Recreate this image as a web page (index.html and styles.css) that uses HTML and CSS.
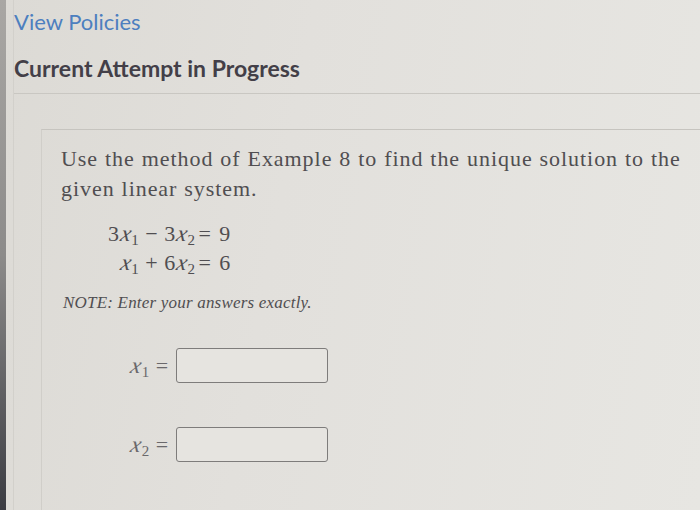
FILE: index.html
```html
<!DOCTYPE html>
<html>
<head>
<meta charset="utf-8">
<link rel="stylesheet" href="styles.css">
</head>
<body>
<div class="edge"></div>
<div class="page">
  <header class="top">
    <a class="policies">View Policies</a>
    <h1 class="attempt">Current Attempt in Progress</h1>
  </header>
  <section class="question">
    <p class="prompt">Use the method of Example 8 to find the unique solution to the given linear system.</p>
    <div class="system">
      <div class="eq"><span class="lhs">3<span class="mi">x</span><sub>1</sub> − 3<span class="mi">x</span><sub>2</sub></span><span class="rhs">= 9</span></div>
      <div class="eq"><span class="lhs"><span class="mi">x</span><sub>1</sub> + 6<span class="mi">x</span><sub>2</sub></span><span class="rhs">= 6</span></div>
    </div>
    <p class="note">NOTE: Enter your answers exactly.</p>
    <div class="answer"><span class="var"><span class="mi">x</span><sub>1</sub> =</span><span class="box"></span></div>
    <div class="answer second"><span class="var"><span class="mi">x</span><sub>2</sub> =</span><span class="box"></span></div>
  </section>
</div>
</body>
</html>
```

FILE: styles.css
```css
html, body {
  margin: 0;
  padding: 0;
  height: 100%;
}
body {
  width: 700px;
  height: 510px;
  overflow: hidden;
  background: linear-gradient(100deg, #dcdad5 0%, #e2e0dc 40%, #e7e6e2 100%);
  display: flex;
}
.edge {
  width: 6px;
  flex: none;
  background: linear-gradient(180deg, #a9a7a4 0%, #8c8b8a 50%, #3b3c42 100%);
}
.page {
  flex: 1;
  margin-left: 7px;
  border-left: 1px solid #d2d0cb;
  display: flex;
  flex-direction: column;
}
.top {
  border-bottom: 1px solid #c9c7c2;
  padding: 8px 0 0 0;
  height: 94px;
  box-sizing: border-box;
  margin-bottom: 35px;
}
.policies {
  display: block;
  font-family: Lato, "Open Sans", sans-serif;
  font-size: 22px;
  color: #4d7fbf;
  line-height: 28px;
}
.attempt {
  margin: 18px 0 0 0;
  font-family: Lato, "Open Sans", sans-serif;
  font-weight: 700;
  font-size: 23px;
  line-height: 28px;
  color: #433f48;
}
.question {
  flex: 1;
  margin-left: 27px;
  border-top: 1px solid #c6c4bf;
  border-left: 1px solid #d0cec9;
  padding: 14px 0 0 19px;
  font-family: "Liberation Serif", "DejaVu Serif", serif;
  color: #504e51;
}
.prompt {
  margin: 0;
  font-size: 22px;
  line-height: 30px;
  letter-spacing: 0.95px;
  word-spacing: 0.5px;
  width: 630px;
}
.system {
  margin: 15px 0 0 47px;
  display: grid;
  grid-template-columns: max-content max-content;
  font-size: 22px;
  line-height: 29px;
}
.eq {
  display: contents;
}
.lhs {
  text-align: right;
  white-space: nowrap;
  letter-spacing: 0.5px;
}
.rhs {
  padding-left: 3px;
  white-space: nowrap;
  letter-spacing: 1.5px;
}
.mi {
  display: inline-block;
  font-family: "Liberation Serif", serif;
  font-style: italic;
  font-size: 1.05em;
  margin-left: 1px;
  transform: skewX(-12deg);
}
sub {
  font-size: 15px;
  vertical-align: -4px;
  line-height: 0;
}
.note {
  margin: 15px 0 0 2px;
  font-size: 17px;
  font-style: italic;
  line-height: 22px;
  letter-spacing: 0.2px;
}
.answer {
  margin: 34px 0 0 69px;
  display: flex;
  align-items: center;
  gap: 7px;
  font-size: 22px;
  color: #6a686b;
}
.answer.second {
  margin-top: 44px;
}
.var {
  white-space: nowrap;
  letter-spacing: 0.5px;
}
.box {
  width: 150px;
  height: 33px;
  border: 1px solid #7e7c7b;
  border-radius: 3px;
  background: #e6e4e0;
}
```
